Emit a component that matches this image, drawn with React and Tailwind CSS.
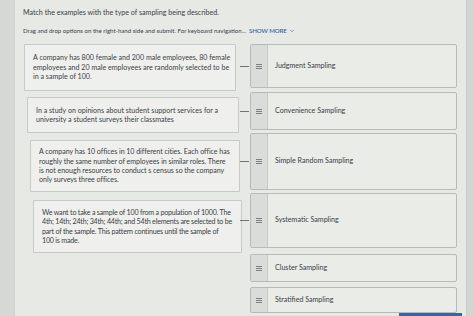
import { ChevronDown } from 'lucide-react';

const cards = [
  {
    box: 'mt-0 ml-[1px] w-[212px] h-[47px]',
    tight: '',
    lines: [
      'A company has 800 female and 200 male employees, 80 female',
      'employees and 20 male employees are randomly selected to be',
      'in a sample of 100.',
    ],
  },
  {
    box: 'mt-[6px] ml-[4px] w-[212px] h-[36px]',
    tight: '',
    lines: [
      'In a study on opinions about student support services for a',
      'university a student surveys their classmates',
    ],
  },
  {
    box: 'mt-[7px] ml-[7px] w-[210px] h-[52px]',
    tight: 'tracking-[-0.05px]',
    lines: [
      'A company has 10 offices in 10 different cities. Each office has',
      'roughly the same number of employees in similar roles. There',
      'is not enough resources to conduct s census so the company',
      'only surveys three offices.',
    ],
  },
  {
    box: 'mt-[8px] ml-[10px] w-[209px] h-[53px]',
    tight: 'tracking-[-0.2px]',
    lines: [
      'We want to take a sample of 100 from a population of 1000. The',
      '4th; 14th; 24th; 34th; 44th; and 54th elements are selected to be',
      'part of the sample. This pattern continues until the sample of',
      '100 is made.',
    ],
  },
];

const options = [
  { label: 'Judgment Sampling', box: 'mt-0 h-[44px]', linked: true },
  { label: 'Convenience Sampling', box: 'mt-[4px] h-[38px]', linked: true },
  { label: 'Simple Random Sampling', box: 'mt-[3px] h-[57px]', linked: true },
  { label: 'Systematic Sampling', box: 'mt-[3px] h-[55px]', linked: true },
  { label: 'Cluster Sampling', box: 'mt-[6px] h-[28px]', linked: false },
  { label: 'Stratified Sampling', box: 'mt-[5px] h-[26px]', linked: false },
];

function Handle() {
  return (
    <div className="flex w-[17px] shrink-0 items-center justify-center self-stretch border-r border-[#c6c9c6] bg-[#d9dcd9]">
      <svg width="6" height="5" viewBox="0 0 6 5">
        <rect x="0" y="0" width="6" height="1" fill="#7b7f82" />
        <rect x="0" y="2" width="6" height="1" fill="#7b7f82" />
        <rect x="0" y="4" width="6" height="1" fill="#7b7f82" />
      </svg>
    </div>
  );
}

export default function App() {
  return (
    <div
      className="flex h-[316px] w-[474px] overflow-hidden bg-[#e7e9e5] text-[#3b4045]"
      style={{ fontFamily: 'Lato, "Noto Sans", sans-serif' }}
    >
      <div className="w-[15px] shrink-0 border-r border-[#cfd1ce] bg-[#d6d8d5]"></div>

      <div className="flex-1 pl-[8px] pt-[8px]">
        <p className="whitespace-nowrap text-[7.1px] leading-[9px]">
          Match the examples with the type of sampling being described.
        </p>
        <p className="mt-[10px] flex items-center whitespace-nowrap text-[6.1px] leading-[8px]">
          Drag and drop options on the right-hand side and submit. For keyboard navigation...
          <span className="ml-[3px] font-semibold tracking-[-0.1px] text-[#3567b0]">SHOW MORE</span>
          <ChevronDown size={6} strokeWidth={2.5} className="ml-[2px] text-[#3567b0]" />
        </p>

        <div className="mt-[9px] flex">
          {/* left column: examples */}
          <div className="w-[212px] shrink-0">
            {cards.map((c, i) => (
              <div
                key={i}
                className={`${c.box} ${c.tight} flex items-center rounded-[1px] border border-[#c7c9c6] bg-[#eff0ed] px-[8px] text-[7.1px] leading-[9.4px]`}
              >
                <div>
                  {c.lines.map((l, j) => (
                    <span key={j} className="block whitespace-nowrap">
                      {l}
                    </span>
                  ))}
                </div>
              </div>
            ))}
          </div>

          {/* right column: sampling types */}
          <div className="w-[222px] shrink-0">
            {options.map((o, i) => (
              <div key={i} className={`${o.box} flex items-center`}>
                <div className="flex w-[15px] shrink-0 items-center">
                  {o.linked && <div className="ml-[5px] h-px w-[9px] bg-[#6f7375]"></div>}
                </div>
                <div className="flex h-full w-[207px] items-center rounded-[2px] border-[1.5px] border-[#b7bab7] bg-[#eaece8]">
                  <Handle />
                  <span className="ml-[7px] whitespace-nowrap text-[7.1px]">{o.label}</span>
                </div>
              </div>
            ))}
            <div className="ml-[164px] h-[3px] w-[63px] bg-[#3a62a8]"></div>
          </div>
        </div>
      </div>

      <div className="w-[8px] shrink-0 border-l border-[#c9cbc8] bg-[#d3d5d2]"></div>
    </div>
  );
}
